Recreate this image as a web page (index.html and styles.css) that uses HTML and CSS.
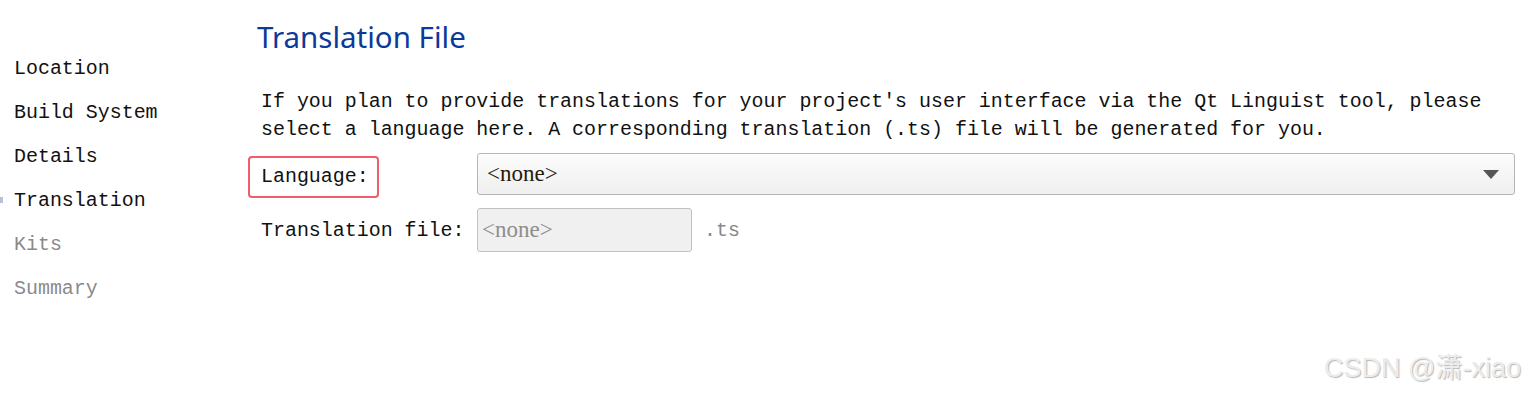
FILE: index.html
```html
<!DOCTYPE html>
<html lang="en">
<head>
    <meta charset="UTF-8">
    <title>Translation File</title>
    <link rel="stylesheet" href="styles.css">
</head>
<body>
    <div class="wizard">
        <ul class="steps">
            <li class="step">Location</li>
            <li class="step">Build System</li>
            <li class="step">Details</li>
            <li class="step current">Translation</li>
            <li class="step disabled">Kits</li>
            <li class="step disabled">Summary</li>
        </ul>

        <div class="page">
            <h1 class="page-title">Translation File</h1>
            <p class="page-desc">If you plan to provide translations for your project's user interface via the Qt Linguist tool, please select a language here. A corresponding translation (.ts) file will be generated for you.</p>

            <div class="form">
                <div class="form-label"><span class="marked">Language:</span></div>
                <div class="combo">
                    <span class="combo-text">&lt;none&gt;</span>
                    <svg class="combo-arrow" width="16" height="9" viewBox="0 0 16 9"><path d="M0 0h16L8 9z" fill="#555"/></svg>
                </div>

                <div class="form-label">Translation file:</div>
                <div class="file-field">
                    <div class="file-input">&lt;none&gt;</div>
                    <span class="file-ext">.ts</span>
                </div>
            </div>
        </div>
    </div>

    <div class="watermark">CSDN @潇-xiao</div>
</body>
</html>
```

FILE: styles.css
```css
body {
    margin: 0;
    background: #fff;
    color: #111;
    font-family: 'Liberation Mono', 'Noto Sans CJK SC', monospace;
    font-size: 19.95px;
    width: 1526px;
    height: 393px;
    overflow: hidden;
    position: relative;
}
.wizard {
    display: flex;
}
.steps {
    list-style: none;
    margin: 47px 0 0;
    padding: 0;
    width: 257px;
    flex-shrink: 0;
}
.step {
    height: 44px;
    line-height: 44px;
    padding-left: 14px;
    position: relative;
}
.step.current::before {
    content: '';
    position: absolute;
    left: 0;
    top: 18px;
    width: 3px;
    height: 6px;
    background: #b7c3d3;
}
.step.disabled {
    color: #8a8a8a;
}
.page {
    flex: 1;
    padding-right: 11px;
}
.page-title {
    margin: 17px 0 0;
    font-family: 'Noto Sans', sans-serif;
    font-weight: normal;
    font-size: 29.5px;
    line-height: 40px;
    color: #0a3a9a;
}
.page-desc {
    margin: 31px 0 0 4px;
    line-height: 28px;
}
.form {
    display: grid;
    grid-template-columns: 220px 1fr;
    row-gap: 13px;
    align-items: center;
    margin-top: 9px;
}
.form-label {
    padding-left: 4px;
}
/* red highlight drawn over the label */
.marked {
    display: inline-block;
    position: relative;
    top: 3px;
    margin-left: -13px;
    padding: 5px 8px 5px 11px;
    border: 2px solid #f25b6a;
    border-radius: 4px;
    line-height: 28px;
}
.combo {
    height: 40px;
    border: 1px solid #b5b5b5;
    border-radius: 3px;
    background: linear-gradient(#fcfcfc, #efefef);
    display: flex;
    align-items: center;
    justify-content: space-between;
    padding: 0 15px 0 9px;
}
.combo-text {
    font-family: 'Liberation Serif', serif;
    font-size: 23px;
    color: #2a1a08;
}
.file-field {
    display: flex;
    align-items: center;
    gap: 12px;
}
.file-input {
    width: 215px;
    height: 44px;
    box-sizing: border-box;
    border: 1px solid #c2c2c2;
    border-radius: 3px;
    background: #f0f0f0;
    padding-left: 4px;
    line-height: 42px;
    font-family: 'Liberation Serif', serif;
    font-size: 23px;
    color: #8d8d8d;
}
.file-ext {
    color: #888;
}
.watermark {
    position: absolute;
    right: 5px;
    top: 346px;
    font-family: 'Liberation Sans', 'Noto Sans CJK SC', sans-serif;
    font-size: 27px;
    color: #ececec;
    text-shadow: 1px 1px 1px #b8b8b8;
}
```
